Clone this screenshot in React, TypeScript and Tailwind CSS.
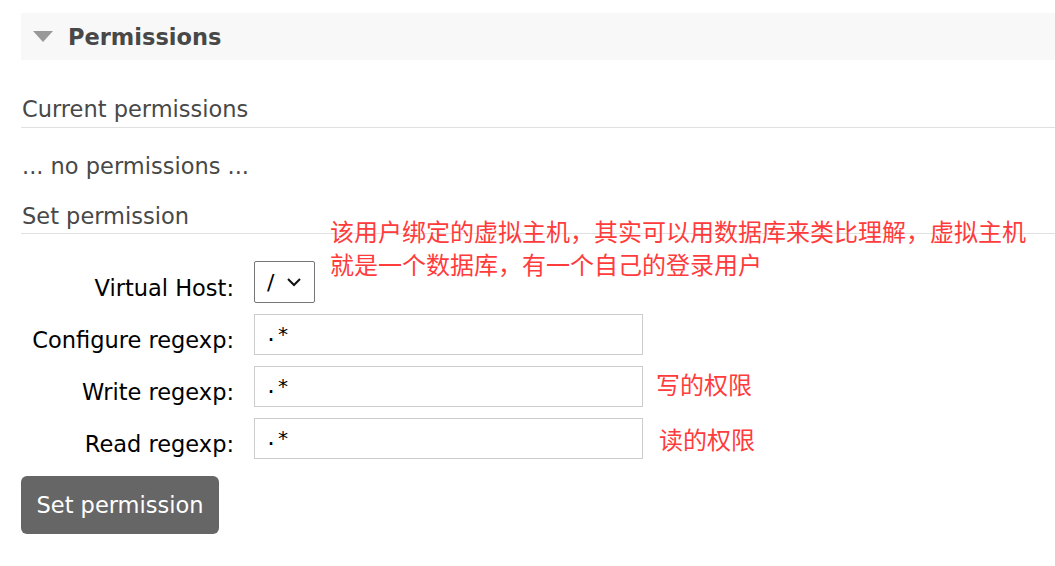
import type { ReactNode } from "react";

const font = { fontFamily: '"DejaVu Sans", Verdana, "Noto Sans CJK SC", sans-serif' };

function Row({ label, children, note }: { label: string; children: ReactNode; note?: ReactNode }) {
  return (
    <div className="flex h-[52px] items-center">
      <label className="mt-[13px] w-[234px] shrink-0 text-right text-[22.5px] text-black">{label}</label>
      <div className="ml-[20px] flex items-center">{children}</div>
      {note}
    </div>
  );
}

function RegexpInput() {
  return (
    <input
      defaultValue=".*"
      className="h-[41px] w-[389px] border border-[#cccccc] bg-white px-[10px] text-[20px] text-black outline-none"
      style={{ fontFamily: '"DejaVu Sans Mono", monospace' }}
    />
  );
}

export default function App() {
  return (
    <div className="relative h-[566px] w-[1055px] bg-white pt-[13px]" style={font}>
      <div className="ml-[21px] flex h-[47px] items-center bg-[#f8f8f8]">
        <span className="ml-[12px] h-0 w-0 border-x-[10px] border-t-[11px] border-x-transparent border-t-[#999999]" />
        <h2 className="ml-[15px] mt-[2px] text-[22.5px] font-bold text-[#484848]">Permissions</h2>
      </div>

      <div className="ml-[21px] text-[#484848]">
        <h3 className="mt-[34px] border-b border-[#e0e0e0] pb-[3px] pl-[1px] text-[22.5px] leading-[30px]">
          Current permissions
        </h3>
        <p className="mt-[23px] pl-[1px] text-[22.5px] leading-[30px]">... no permissions ...</p>
        <h3 className="mt-[20px] border-b border-[#e0e0e0] pb-[2px] pl-[1px] text-[22.5px] leading-[30px]">
          Set permission
        </h3>
      </div>

      <div className="mt-[22px]">
        <Row
          label="Virtual Host:"
          children={
            <div className="flex h-[42px] w-[61px] items-center justify-between rounded-[2px] border border-[#767676] px-[12px] text-[22px] text-black">
              <span>/</span>
              <svg width="16" height="10" viewBox="0 0 16 10" fill="none" stroke="#111" strokeWidth="2">
                <path d="M2 2l6 6 6-6" />
              </svg>
            </div>
          }
        />
        <Row label="Configure regexp:" children={<RegexpInput />} />
        <Row
          label="Write regexp:"
          children={<RegexpInput />}
          note={<span className="ml-[13px] text-[24px] text-[#ff3b3b]">写的权限</span>}
        />
        <Row
          label="Read regexp:"
          children={<RegexpInput />}
          note={<span className="ml-[16px] mt-[6px] text-[24px] text-[#ff3b3b]">读的权限</span>}
        />
      </div>

      <button className="ml-[21px] mt-[12px] h-[58px] w-[198px] rounded-[6px] bg-[#666666] pt-[2px] text-center text-[22.5px] text-white">
        Set permission
      </button>

      <p className="absolute left-[330px] top-[217px] w-[710px] text-[24px] leading-[33px] text-[#ff3b3b]">
        该用户绑定的虚拟主机，其实可以用数据库来类比理解，虚拟主机就是一个数据库，有一个自己的登录用户
      </p>
    </div>
  );
}
